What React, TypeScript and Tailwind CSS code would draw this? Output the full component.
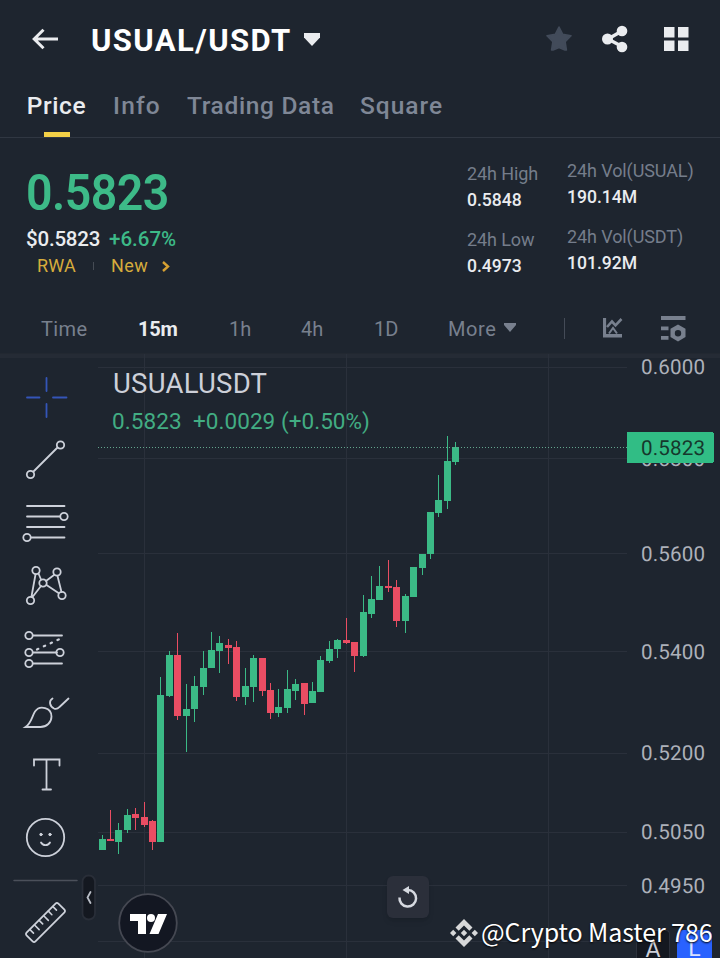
import React from "react";

const GREEN = "#3bba86";
const RED = "#ea4d63";

// x of the body's left edge, body top/bottom, wick top/bottom, rising?
type Candle = [number, number, number, number, number, 0 | 1];

const candles: Candle[] = [
  [99, 839, 850, 835, 850, 1], [107, 839, 841, 810, 841, 0], [115, 830, 842, 823, 854, 1],
  [124, 815, 830, 809, 833, 1], [132, 814, 818, 808, 830, 0], [141, 817, 825, 802, 827, 0],
  [149, 821, 842, 820, 850, 0], [157, 695, 842, 677, 842, 1], [166, 655, 696, 651, 697, 1],
  [174, 655, 716, 633, 720, 0], [183, 709, 716, 684, 752, 1], [191, 686, 709, 676, 722, 1],
  [200, 668, 687, 651, 695, 1], [208, 650, 668, 632, 668, 1], [216, 643, 651, 636, 673, 1],
  [225, 645, 648, 639, 664, 0], [233, 647, 697, 641, 701, 0], [242, 686, 697, 668, 705, 1],
  [250, 658, 687, 655, 702, 1], [259, 658, 691, 658, 696, 0], [267, 690, 713, 683, 719, 0],
  [275, 707, 713, 689, 717, 1], [284, 689, 708, 670, 713, 1], [292, 684, 691, 679, 700, 1],
  [301, 683, 704, 683, 715, 0], [309, 691, 703, 682, 703, 1], [317, 660, 692, 656, 692, 1],
  [326, 649, 661, 641, 663, 1], [334, 640, 649, 639, 658, 1], [343, 640, 643, 618, 644, 0],
  [351, 642, 656, 642, 672, 0], [360, 612, 656, 595, 657, 1], [368, 599, 614, 576, 618, 1],
  [376, 586, 600, 566, 600, 1], [385, 586, 588, 560, 592, 0], [393, 587, 621, 580, 627, 0],
  [402, 596, 621, 594, 633, 1], [410, 567, 597, 567, 597, 1], [419, 554, 568, 554, 575, 1],
  [427, 512, 554, 512, 559, 1], [435, 500, 513, 475, 517, 1], [444, 461, 501, 436, 509, 1],
  [452, 447, 462, 442, 465, 1],
];

const gridRows = [367, 458, 553, 651, 753, 832, 885, 941];
const gridCols = [144, 346, 548];
const axisLabels: [string, number][] = [
  ["0.6000", 366], ["0.5800", 458.5], ["0.5600", 553], ["0.5400", 651],
  ["0.5200", 752], ["0.5050", 831], ["0.4950", 885],
];

function Header() {
  return (
    <header className="flex h-[78px] items-center pl-8 pr-[31px]">
      <svg width="26" height="22" viewBox="0 0 26 22" fill="none" stroke="#eaecef" strokeWidth="3">
        <path d="M11.5 1.8 2.2 11l9.3 9.2M2.5 11H26" />
      </svg>
      <h1 className="ml-[33px] mt-[3px] w-[200px] whitespace-nowrap text-[31px] font-bold leading-10 tracking-[1.4px] text-white">USUAL/USDT</h1>
      <svg className="ml-[13px]" width="16" height="13" viewBox="0 0 16 13">
        <path d="M0 0h16v4.5L8 13 0 4.5Z" fill="#eaecef" />
      </svg>
      <div className="-mt-px ml-auto flex items-center">
        <svg className="mt-px" width="28" height="28" viewBox="0 0 28 28">
          <path d="M14 2l3.7 7.4 8.3 1.3-5.9 6 1.3 8.3H20l-6-2.6L8 25H6.6l1.3-8.3-5.9-6 8.3-1.3Z" fill="#424b5a" stroke="#424b5a" strokeWidth="1.6" strokeLinejoin="round" />
        </svg>
        <svg className="ml-[28px]" width="28" height="28" viewBox="0 0 28 28" fill="#eaecef">
          <path d="M21 6 7 14l14 7.5" fill="none" stroke="#eaecef" strokeWidth="3.4" />
          <circle cx="21" cy="6" r="5.3" /><circle cx="6.5" cy="14" r="5.5" /><circle cx="21" cy="22" r="5.3" />
        </svg>
        <svg className="ml-[35px]" width="25" height="24" viewBox="0 0 25 24" fill="#eaecef">
          <path d="M0 0h10.5v10.5H0zM14 0h10.5v10.5H14zM0 13.5h10.5V24H0zM14 13.5h10.5V24H14z" />
        </svg>
      </div>
    </header>
  );
}

function Tabs() {
  return (
    <nav className="flex h-[60px] border-b border-[#303742] pl-[27px] pt-3 text-[24.5px] font-medium leading-8 text-[#7f8796]">
      <div className="mr-[27px] flex w-[59px] flex-col items-center">
        <span className="whitespace-nowrap tracking-[0.6px] text-[#eaecef]">Price</span>
        <span className="mt-[10px] h-[5px] w-[26px] shrink-0 bg-[#f3d047]" />
      </div>
      <span className="w-[74px] whitespace-nowrap tracking-[1.2px]">Info</span>
      <span className="w-[173px] whitespace-nowrap tracking-[0.65px]">Trading Data</span>
      <span className="whitespace-nowrap tracking-[1px]">Square</span>
    </nav>
  );
}

function Stat({ label, value }: { label: string; value: string }) {
  return (
    <div className="h-[66px] whitespace-nowrap">
      <div className="text-[18px] leading-[26px] tracking-[-0.1px] text-[#757d8b]">{label}</div>
      <div className="w-max origin-left scale-x-[0.95] text-[18.5px] font-medium leading-[26px] text-[#eaecef]">{value}</div>
    </div>
  );
}

function Summary() {
  return (
    <section className="flex h-[166px] pl-[26px]">
      <div className="w-[441px] whitespace-nowrap">
        <div className="mt-[26px] w-max origin-left scale-x-[0.93] text-[50px] font-semibold leading-[58px] tracking-[-0.6px] text-[#3dba88]">0.5823</div>
        <div className="mt-[5px] flex text-[20.5px] font-medium leading-6">
          <span className="w-[83px] tracking-[-0.2px] text-[#eaecef]">$0.5823</span>
          <span className="text-[#3dba88]">+6.67%</span>
        </div>
        <div className="mt-[3px] flex items-center pl-[11px] text-[18px] leading-6 text-[#d6ac3c]">
          <span className="w-[56px] tracking-[0.2px]">RWA</span>
          <span className="h-2 w-px bg-[#464c55]" />
          <span className="ml-[17px] w-[51px] tracking-[0.4px]">New</span>
          <svg width="8" height="11" viewBox="0 0 8 11" fill="none" stroke="#d6a032" strokeWidth="2.4"><path d="m1 1 5 4.5L1 10" /></svg>
        </div>
      </div>
      <div className="w-[100px] pt-[23px]"><Stat label="24h High" value="0.5848" /><Stat label="24h Low" value="0.4973" /></div>
      <div className="pt-5"><Stat label="24h Vol(USUAL)" value="190.14M" /><Stat label="24h Vol(USDT)" value="101.92M" /></div>
    </section>
  );
}

function Intervals() {
  return (
    <div className="flex h-[49px] items-center whitespace-nowrap pl-[41px] text-[20px] text-[#78808e]">
      <span className="w-[97px] tracking-[0.4px]">Time</span>
      <span className="w-[91px] font-bold tracking-[-0.2px] text-[#eaecef]">15m</span>
      <span className="w-[72px]">1h</span>
      <span className="w-[73px]">4h</span>
      <span className="w-[74px]">1D</span>
      <span className="w-[56px] tracking-[0.6px]">More</span>
      <svg className="-mt-0.5" width="12" height="9" viewBox="0 0 12 9"><path d="M0 0h12v2L6 9 0 2Z" fill="#78808e" /></svg>
      <span className="-mt-px ml-12 h-[21px] w-px bg-[#444b57]" />
      <svg className="-mt-0.5 ml-[38px]" width="20" height="20" viewBox="0 0 20 20" fill="none" stroke="#78808e" strokeWidth="2.6">
        <path d="M1.4 0v17.8H19" strokeWidth="3.4" /><path d="m4 9 5-5.5 3.5 3.8L18.5 1" /><path d="m6 15.500 4-5.500 4 5.500" strokeWidth="2" />
      </svg>
      <svg className="ml-[38px]" width="25" height="26" viewBox="0 0 25 26" fill="#78808e">
        <path d="M0 0h24.5v4H0zM0 10.500h7.500v3.800H0zM0 20h7.500v3.800H0z" />
        <path fillRule="evenodd" d="m17 8.500 7.500 4.200V21L17 25.500 9.500 21v-8.300ZM17 14a3.200 3.200 0 1 0 0 6.400 3.200 3.200 0 0 0 0-6.400Z" />
      </svg>
    </div>
  );
}

const stroke = { fill: "none", stroke: "#cdd1da", strokeWidth: 1.8 } as const;

function ToolBar() {
  return (
    <aside className="flex w-[98px] flex-col">
      <svg width="98" height="600" viewBox="0 358 98 600" {...stroke} strokeLinecap="round">
        <path d="M46.5 378v13M46.5 404v13M27 397.5h12.5M53 397.5h13.5" stroke="#3455b8" />
        <path d="m33.5 471.5 24-24" /><circle cx="60.5" cy="445" r="3.7" /><circle cx="30.5" cy="474.5" r="3.7" />
        <path d="M27 506h37.5M27 516.5h33M27 527h37.5M31 537.5h33.5" /><circle cx="64" cy="516.5" r="3.7" /><circle cx="27" cy="537.5" r="3.7" />
        <path d="m35.5 574.5-4 22M32.5 597l8.500-11M38.500 573.500l2.500 6M46 581l8-6M57.500 576l4 16M46.500 585l12 8" />
        <circle cx="36" cy="570.500" r="3.700" /><circle cx="57" cy="572" r="3.700" /><circle cx="43" cy="583" r="3.700" /><circle cx="30.500" cy="600.500" r="3.700" /><circle cx="62" cy="595.500" r="3.700" />
        <path d="M33 635.500h29M33 652.500h24M33 663.500h29" /><path d="M37 649.500 62 638" strokeDasharray="1.500 6" strokeWidth="2.200" />
        <circle cx="29" cy="635.500" r="3.700" /><circle cx="29" cy="652.500" r="3.700" /><circle cx="60" cy="652.500" r="3.700" /><circle cx="29" cy="663.500" r="3.700" />
        <path d="M25.500 727c6-4 6.500-11 9.500-15.500 5-7 16.500-3.500 16.500 5 0 6-5 10.500-11 10.500Z" />
        <path d="M52.500 698.500c-4 2.500-3 7.500 1.500 10 3 1.500 4.500-.500 6-2l8.500-8" />
        <path d="M34 765.500v-6h25.500v6M46.500 760v29.500M42.500 789.500h8.500" />
        <circle cx="45.500" cy="837.500" r="18.700" /><circle cx="41" cy="834.500" r="1.200" fill="#cdd1da" stroke="#cdd1da" strokeWidth="1" /><circle cx="50" cy="834.500" r="1.200" fill="#cdd1da" stroke="#cdd1da" strokeWidth="1" />
        <path d="M41 842.500c1.800 3.500 7.200 3.500 9 0" />
        <path d="M14 880.500h63" stroke="#4b505a" strokeWidth="1.500" />
        <g transform="translate(45.500 922.500) rotate(-45)">
          <rect x="-22.500" y="-6.300" width="45" height="12.600" rx="2" />
          <path d="M-16-6v5M-9.500-6v6.500M-3-6v5M3.500-6v6.500M10-6v5M16.500-6v5" strokeWidth="1.600" />
        </g>
        <rect x="82.500" y="875.500" width="12.500" height="44" rx="6" fill="#141820" stroke="#292e38" />
        <path d="m90.500 892-3 5.500 3 5.500" stroke="#b9bdc6" />
      </svg>
    </aside>
  );
}

function PriceChart() {
  return (
    <div className="relative flex-1">
      <svg width="622" height="604" viewBox="98 354 622 604" shapeRendering="crispEdges">
        <g stroke="#2a303b">
          {gridRows.map((y) => <path key={y} d={`M98 ${y + 0.5}H627`} />)}
          {gridCols.map((x) => <path key={x} d={`M${x + 0.5} 354V958`} />)}
        </g>
        {candles.map(([x, top, bottom, high, low, up]) => (
          <g key={x} fill={up ? GREEN : RED}>
            <rect x={x + 3} y={high} width="1" height={low - high} />
            <rect x={x} y={top} width="7" height={bottom - top} />
          </g>
        ))}
        <path d="M98 447.500H627" stroke="#63a58d" strokeDasharray="1 2" />
        <g className="font-[Roboto]" fontSize="20.600" fill="#adb1ba" textRendering="geometricPrecision">
          {axisLabels.map(([text, y]) => <text key={text} x="641" y={y + 7.500} textLength="64">{text}</text>)}
          <path d="M627 432h84q3 0 3 3v25q0 3-3 3h-84Z" fill="#31bd85" />
          <text x="641" y="455" textLength="64" fill="#16372c">0.5823</text>
        </g>
      </svg>
      <div className="absolute left-[15px] top-[14px] whitespace-nowrap">
        <div className="text-[27.500px] leading-8 tracking-[0.25px] text-[#cdd0d9]">USUALUSDT</div>
        <div className="mt-[9px] flex text-[22.500px] leading-6 text-[#42ad83]">
          <span className="-ml-px w-[80px] tracking-[0.1px]">0.5823</span><span className="ml-px tracking-[0.050px]">+0.0029 (+0.50%)</span>
        </div>
      </div>
      <svg className="absolute left-5 top-[539px]" width="60" height="60" viewBox="0 0 60 60">
        <circle cx="30" cy="30" r="28.800" fill="#131722" stroke="#454852" strokeWidth="1.800" />
        <path d="M12 21h16v20h-8V28h-8ZM40 21h9l-8.500 20h-9Z" fill="#fff" /><circle cx="33" cy="25" r="4" fill="#fff" />
      </svg>
      <button className="absolute left-[289px] top-[522px] flex h-[42px] w-[42px] items-center justify-center rounded-md bg-[#2b2f3a] shadow-md" aria-label="Reset">
        <svg width="22" height="24" viewBox="0 0 22 24" fill="none" stroke="#d6d9e0" strokeWidth="2.500">
          <path d="M2.500 12.500a8.300 8.300 0 1 0 8.500-7.500" /><path d="M12 1v8L5.500 5Z" fill="#d6d9e0" stroke="none" />
        </svg>
      </button>
      <div className="absolute right-[8px] top-[576px] flex h-7 gap-[7px] text-center text-[23px] leading-[38px]">
        <span className="w-[34px] rounded-t border border-b-0 border-[#2c313c] bg-[#141820] text-[#cdd0d9]">A</span>
        <span className="w-[35px] rounded-t-md bg-[#2962ff] text-[#d8e0ff]">L</span>
      </div>
      <div className="absolute left-[352px] top-[564px] flex items-center whitespace-nowrap">
        <svg width="28" height="28" viewBox="0 0 28 28" fill="#d7d8d9">
          <path d="m14 0 8.500 8.500-3.200 3.200L14 6.400l-5.300 5.300-3.200-3.200ZM3.200 10.800 6.400 14l-3.200 3.200L0 14ZM14 10.800l3.200 3.200-3.200 3.200-3.200-3.200ZM24.800 10.800 28 14l-3.200 3.200-3.200-3.200ZM8.700 16.300l5.300 5.300 5.300-5.300 3.200 3.200L14 28l-8.500-8.500Z" />
        </svg>
        <span className="-mt-[3px] ml-[3px] font-['Noto_Sans_CJK_SC',sans-serif] text-[25px] leading-8 tracking-[-0.1px] text-white [text-shadow:0_1px_2px_#000]">@Crypto Master 786</span>
      </div>
    </div>
  );
}

export default function App() {
  return (
    <main className="flex h-[958px] w-[720px] flex-col overflow-hidden bg-[#1e252f] font-[Roboto,'Liberation_Sans',sans-serif]">
      <Header />
      <Tabs />
      <Summary />
      <Intervals />
      <div className="h-px shrink-0 bg-[#222831]" />
      <div className="flex h-[604px] border-t-4 border-[#252b35]">
        <ToolBar />
        <div className="-mt-1 flex flex-1"><PriceChart /></div>
      </div>
    </main>
  );
}
